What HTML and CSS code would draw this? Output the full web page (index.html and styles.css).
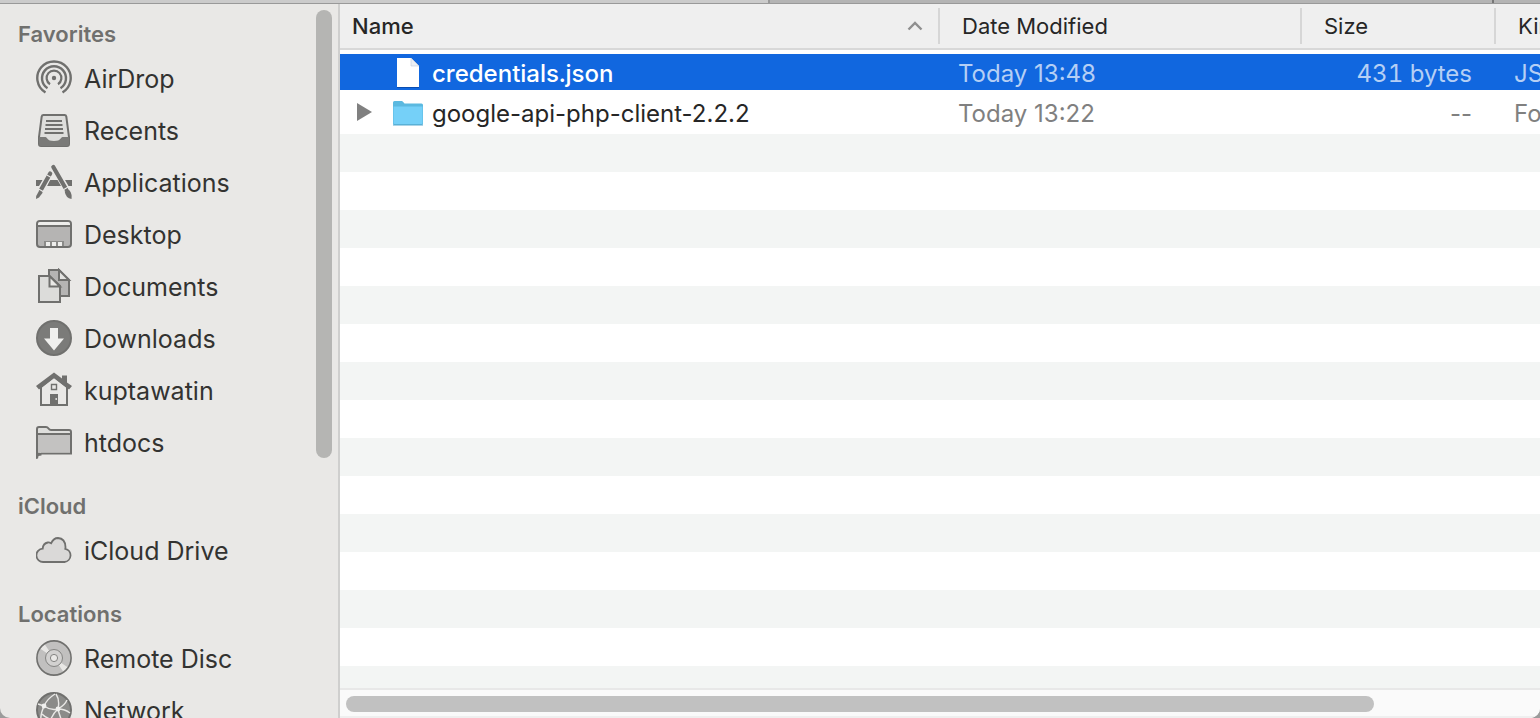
FILE: index.html
```html
<!DOCTYPE html>
<html lang="en">
<head>
    <meta charset="UTF-8">
    <meta name="viewport" content="width=device-width, initial-scale=1.0">
    <title>Finder</title>
    <link rel="stylesheet" href="styles.css">
</head>
<body>
    <div class="tab-strip">
        <div class="tab active"></div>
        <div class="tab"></div>
        <div class="tab-end"></div>
    </div>
    <div class="window">
        <nav class="sidebar">
            <div class="places">
                <h2>Favorites</h2>
                <ul>
                    <li><a href="#airdrop">
                        <svg class="icon" viewBox="0 0 36 36" fill="none" stroke="#70706e" stroke-width="2.4">
                            <path d="M9.5 32.5A16.7 16.7 0 1 1 26.5 32.5"/>
                            <path d="M11.5 28.3A12 12 0 1 1 24.5 28.3"/>
                            <path d="M14 24.2A7.4 7.4 0 1 1 22 24.2" stroke-width="2.2"/>
                            <circle cx="18" cy="18" r="2.2" fill="#70706e" stroke="none"/>
                        </svg>
                        AirDrop</a></li>
                    <li><a href="#recents">
                        <svg class="icon" viewBox="0 0 36 36">
                            <path d="M7.500 3h21q1.500 0 1.800 1.500L33 25v7q0 2-2 2H5q-2 0-2-2v-7L5.700 4.500Q6 3 7.500 3z" fill="#dededc" stroke="#70706e" stroke-width="2"/>
                            <path d="M3 25h6.500c2 0 1 4 8.500 4s6.500-4 8.500-4H33v7q0 2-2 2H5q-2 0-2-2z" fill="#7a7a78"/>
                            <path d="M10 9h16M9.500 13h17M9 17h18M8.500 21h19" stroke="#70706e" stroke-width="1.800"/>
                        </svg>
                        Recents</a></li>
                    <li><a href="#applications">
                        <svg class="icon" viewBox="0 0 36 36">
                            <path d="M0 16h6.500l-3.500 6H0zM13.500 16h8l3.500 6H11zM29 16h7v6h-3.500z" fill="#70706e"/>
                            <path d="M17.300 3L30 25" stroke="#70706e" stroke-width="4.200" stroke-linecap="round"/>
                            <path d="M15 8.500L5.500 25.500" stroke="#e9e8e6" stroke-width="6"/>
                            <path d="M14.200 9.500L5 25.800" stroke="#70706e" stroke-width="4.200" stroke-linecap="round"/>
                            <path d="M3.200 26.500l3.600 2.100L3 33.500 0 35l.2-3z" fill="#70706e"/>
                            <path d="M28.700 27.500l3.600-2.200q4 3.200 3.200 9.700-5.800-1-6.800-7.500z" fill="#70706e"/>
                            <path d="M10.800 11l4.500 2.600M2.600 25l4.500 2.600M27 26l5-2.900" stroke="#e9e8e6" stroke-width="1.100"/>
                        </svg>
                        Applications</a></li>
                    <li><a href="#desktop">
                        <svg class="icon" viewBox="0 0 36 36">
                            <rect x="1" y="5" width="34" height="26" rx="3" fill="#b5b4b3" stroke="#70706e" stroke-width="2"/>
                            <path d="M2 8q0-2 2-2h28q2 0 2 2v1H2z" fill="#eeeeec"/>
                            <path d="M2 10h32" stroke="#70706e" stroke-width="2"/>
                            <path d="M8 30v-5h20v5z" fill="#8b8b89"/>
                            <path d="M10 26h4v4h-4zM16 26h4v4h-4zM22 26h4v4h-4z" fill="#eeeeec"/>
                        </svg>
                        Desktop</a></li>
                    <li><a href="#documents">
                        <svg class="icon" viewBox="0 0 36 36" stroke="#70706e" stroke-width="2">
                            <path d="M13 2h10l10 10v16H13z" fill="#b5b4b3"/>
                            <path d="M23 2v10h10z" fill="#e3e3e1"/>
                            <path d="M3 8h10.500L24 18v16H3z" fill="#dcdcda"/>
                            <path d="M13.500 8v10.500H24z" fill="#e9e8e6"/>
                        </svg>
                        Documents</a></li>
                    <li><a href="#downloads">
                        <svg class="icon" viewBox="0 0 36 36">
                            <circle cx="18" cy="18" r="17" fill="#7b7b79" stroke="#70706e" stroke-width="2"/>
                            <path d="M14 8h8v10.500h6L18 30.500 8 18.500h6z" fill="#f0f0ee"/>
                        </svg>
                        Downloads</a></li>
                    <li><a href="#home">
                        <svg class="icon" viewBox="0 0 36 36" fill="#70706e">
                            <path d="M5 15L18 5l13 10v18H5z" fill="#e9e8e6" stroke="#70706e" stroke-width="2"/>
                            <path d="M0 14L18 .500l8 6V3.500h5v7L36 14l-3 3.500L18 5.800 3 17.500z"/>
                            <path d="M14 22h8v12h-8z"/>
                            <circle cx="20.200" cy="27" r=".9" fill="#e9e8e6"/>
                            <path d="M15.500 12.500h5v5h-5z" fill="none" stroke="#70706e" stroke-width="1.400"/>
                        </svg>
                        kuptawatin</a></li>
                    <li><a href="#htdocs">
                        <svg class="icon" viewBox="0 0 36 36">
                            <path d="M1 31V5q0-2 2-2h7q1.500 0 2.500 1.500T15 6h18q2 0 2 2v21.500H5" fill="#dededc" stroke="#70706e" stroke-width="2"/>
                            <path d="M2 11h32v17.500H2z" fill="#c3c2c1"/>
                            <path d="M1 10h34" stroke="#70706e" stroke-width="2"/>
                            <path d="M0 28.500v6.500l2-.5.500-2.500 3-.5v-2.500z" fill="#70706e"/>
                        </svg>
                        htdocs</a></li>
                </ul>
                <h2>iCloud</h2>
                <ul>
                    <li><a href="#icloud">
                        <svg class="icon" viewBox="0 0 36 36">
                            <path d="M7.500 30a6.700 6.700 0 0 1-.8-13.400Q7 11.500 11.800 10.500q1.700-.2 3.300.8Q17.500 6 22 6q7.200.500 7.500 9 0 .9-.2 1.800A6.700 6.700 0 0 1 28.500 30z" fill="#dad9d8" stroke="#70706e" stroke-width="1.800"/>
                        </svg>
                        iCloud Drive</a></li>
                </ul>
                <h2>Locations</h2>
                <ul>
                    <li><a href="#disc">
                        <svg class="icon" viewBox="0 0 36 36">
                            <circle cx="18" cy="18" r="17" fill="#c1c0bf"/>
                            <path d="M18 18L4 8.500 8.500 4zM18 18l14 9.500-4.500 4.500z" fill="#e8e7e5"/>
                            <circle cx="18" cy="18" r="17.100" fill="none" stroke="#70706e" stroke-width="1.600"/>
                            <circle cx="18" cy="18" r="8.500" fill="#d2d1d0" stroke="#848482" stroke-width="1"/>
                            <circle cx="18" cy="18" r="3.600" fill="#e9e8e6" stroke="#848482" stroke-width="1"/>
                        </svg>
                        Remote Disc</a></li>
                    <li><a href="#network">
                        <svg class="icon" viewBox="0 0 36 36">
                            <circle cx="18" cy="18" r="17" fill="#8b8b89" stroke="#70706e" stroke-width="2"/>
                            <g fill="none" stroke="#e9e8e6" stroke-width="1.400">
                                <path d="M8 14Q11 7 19 2M8 14q7 5 14 3M8 14q-4 9-3 15M8 14L2 12M22 17Q24 8 20 2M22 17q7-4 9-9M22 17q7 0 12 4M22 17q-7 6-9 17M22 17q1 5 5 15M6 22q7 7 20 7"/>
                            </g>
                            <g fill="#f0f0ee"><circle cx="8" cy="14" r="2.400"/><circle cx="22" cy="17" r="2.400"/></g>
                        </svg>
                        Network</a></li>
                </ul>
            </div>
            <div class="scroll-y"><div class="thumb"></div></div>
        </nav>
        <main class="files">
            <div class="list">
                <table>
                    <colgroup>
                        <col class="col-name">
                        <col class="col-date">
                        <col class="col-size">
                        <col class="col-kind">
                    </colgroup>
                    <thead>
                        <tr>
                            <th class="sorted" aria-sort="ascending"><button type="button">Name
                                <svg class="caret" viewBox="0 0 16 10" fill="none" stroke="#8f8f8f" stroke-width="2.4"><path d="M1.500 8.500L8 2l6.500 6.500"/></svg>
                            </button></th>
                            <th><button type="button">Date Modified</button></th>
                            <th><button type="button">Size</button></th>
                            <th><button type="button">Kind</button></th>
                        </tr>
                    </thead>
                    <tbody>
                        <tr class="selected">
                            <td><div class="name">
                                <span class="toggle"></span>
                                <svg class="file-icon" viewBox="0 0 32 32">
                                    <path d="M5 2h14l8 8v21H5z" fill="#fff"/>
                                    <path d="M5 31.500h22" stroke="#0a4db0" stroke-width="1"/>
                                    <path d="M19 2l8 8h-8z" fill="#eceff4" stroke="#c3cbd8" stroke-width=".6"/>
                                </svg>
                                <span class="label">credentials.json</span>
                            </div></td>
                            <td>Today 13:48</td>
                            <td class="size">431 bytes</td>
                            <td>JSON</td>
                        </tr>
                        <tr class="folder">
                            <td><div class="name">
                                <button type="button" class="toggle" aria-label="Expand folder">
                                    <svg viewBox="0 0 16 18"><path d="M1 0l15 9-15 9z" fill="#808080"/></svg>
                                </button>
                                <svg class="file-icon" viewBox="0 0 32 32">
                                    <path d="M1 6.500Q1 5 2.500 5h7q1 0 1.700 1l1.300 1.500h17q1.500 0 1.500 1.500v18.500q0 1.500-1.500 1.500h-27Q1 29 1 27.500z" fill="#5bb9e0"/>
                                    <path d="M1.500 10.500h29V27q0 1-1 1h-27q-1 0-1-1z" fill="#75d0f8"/>
                                    <path d="M1 29h30" stroke="#59a9cf" stroke-width="1"/>
                                </svg>
                                <span class="label">google-api-php-client-2.2.2</span>
                            </div></td>
                            <td>Today 13:22</td>
                            <td class="size">--</td>
                            <td>Folder</td>
                        </tr>
                    </tbody>
                </table>
                <div class="stripes"></div>
            </div>
            <div class="scroll-x"><div class="thumb"></div></div>
        </main>
    </div>
</body>
</html>
```
FILE: styles.css
```css
* {
    box-sizing: border-box;
}
body {
    margin: 0;
    height: 100vh;
    display: flex;
    flex-direction: column;
    overflow: hidden;
    font-family: Inter, sans-serif;
    font-size: 24px;
    color: #262626;
    background: #9b9b9b;
}
button {
    font: inherit;
    color: inherit;
    background: none;
    border: none;
    padding: 0;
    cursor: pointer;
}
.tab-strip {
    display: flex;
    flex: none;
    height: 4px;
    border-bottom: 1px solid #999;
}
.tab {
    flex: 1;
    background: #b4b4b4;
    border-right: 2px solid #777;
}
.tab.active {
    background: #cbcbcb;
    border-right-color: #999;
    flex: 0 0 50%;
}
.tab-end {
    width: 46px;
    background: #b4b4b4;
}
.window {
    display: flex;
    flex: 1;
    min-height: 0;
    border-radius: 0 0 10px 10px;
    overflow: hidden;
}

/* Sidebar */
.sidebar {
    display: flex;
    flex: none;
    width: 340px;
    background: #e9e8e6;
    border-right: 2px solid #cfcfce;
    overflow: hidden;
}
.places {
    flex: 1;
}
.sidebar h2 {
    margin: 0;
    padding: 26px 0 8px 18px;
    font-size: 22px;
    line-height: 22px;
    font-weight: 600;
    color: #70706e;
}
.sidebar h2:first-child {
    padding-top: 19px;
}
.sidebar ul {
    list-style: none;
    margin: 0;
    padding: 0;
}
.sidebar a {
    display: flex;
    align-items: center;
    gap: 12px;
    height: 52px;
    padding-left: 36px;
    font-size: 25px;
    color: #333331;
    text-decoration: none;
}
.icon {
    width: 36px;
    height: 36px;
    flex: none;
    margin-bottom: 2px;
}
.scroll-y {
    width: 22px;
    padding: 6px 6px 6px 0;
}
.scroll-y .thumb {
    width: 16px;
    height: 448px;
    border-radius: 8px;
    background: #b5b5b3;
}

/* File list */
.files {
    display: flex;
    flex-direction: column;
    flex: 1;
    min-width: 0;
    background: #fff;
}
.list {
    display: flex;
    flex-direction: column;
    flex: 1;
    min-height: 0;
    overflow: hidden;
}
table {
    table-layout: fixed;
    width: 1388px;
    border-collapse: collapse;
}
.col-name {
    width: 600px;
}
.col-date {
    width: 362px;
}
.col-size {
    width: 194px;
}
thead tr {
    height: 46px;
    background: linear-gradient(#d8d8d8, #d8d8d8) bottom / 100% 2px no-repeat #efefef;
}
th {
    padding: 0;
    font-size: 22px;
    font-weight: 400;
    text-align: left;
    background: linear-gradient(#d6d6d6, #d6d6d6) right 4px / 2px 36px no-repeat;
}
th button {
    display: flex;
    align-items: center;
    justify-content: space-between;
    width: 100%;
    height: 44px;
    padding: 0 17px 2px 22px;
}
th.sorted button {
    padding-left: 12px;
    font-weight: 500;
}
.caret {
    width: 16px;
    height: 10px;
}
tbody::before {
    content: '';
    display: block;
    height: 4px;
}
td {
    height: 36px;
    padding: 4px 24px 0 18px;
    line-height: 32px;
    white-space: nowrap;
    color: #808080;
}
td:first-child {
    padding: 0 0 0 12px;
    color: #262626;
}
.size {
    text-align: right;
}
.selected td {
    background: #1167df;
    color: #b5cff5;
    font-variant-numeric: tabular-nums;
}
.selected td:nth-child(2) {
    font-variant-numeric: normal;
}
.selected td:first-child {
    color: #fff;
    font-weight: 500;
}
.folder td {
    height: 44px;
}
.name {
    display: flex;
    align-items: center;
}
.label {
    padding-top: 4px;
}
.toggle {
    display: flex;
    width: 40px;
    padding-left: 4px;
}
.toggle svg {
    width: 16px;
    height: 18px;
}
.file-icon {
    width: 32px;
    height: 32px;
    margin-right: 8px;
}
.stripes {
    flex: 1;
    background: repeating-linear-gradient(#f3f5f4 0 38px, #fff 38px 76px);
}
.scroll-x {
    flex: none;
    height: 30px;
    padding: 6px;
    background: #fafafa;
    border-top: 2px solid #e8e8e8;
    border-bottom: 2px solid #efefef;
}
.scroll-x .thumb {
    width: 86.5%;
    height: 16px;
    border-radius: 8px;
    background: #c1c1c1;
}
```
